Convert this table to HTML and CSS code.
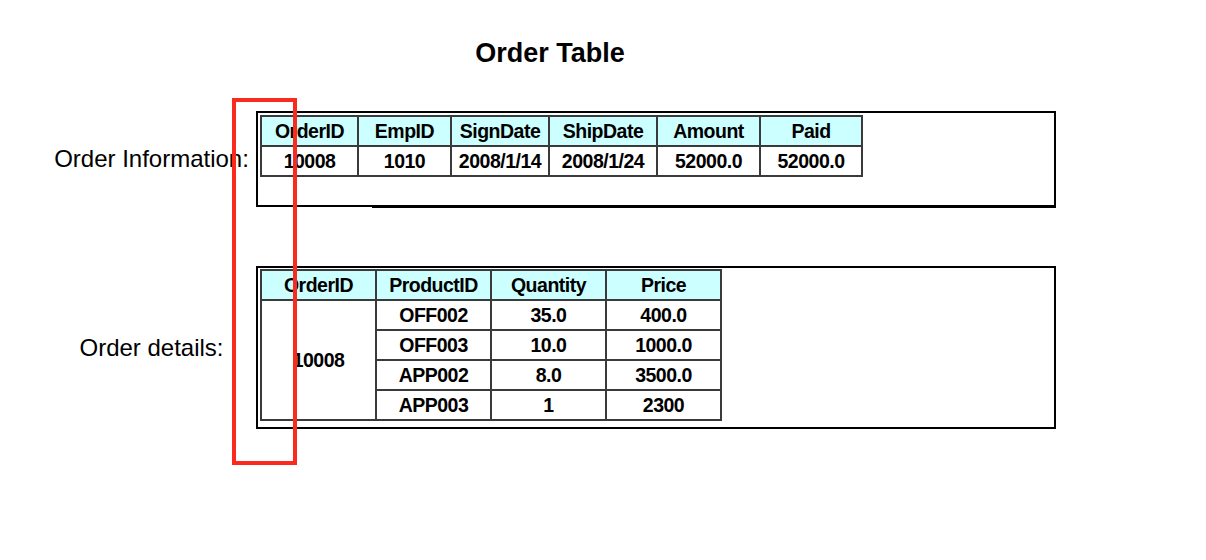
FILE: index.html
```html
<!DOCTYPE html>
<html lang="en">
<head>
<meta charset="utf-8">
<title>Order Table</title>
<link rel="stylesheet" href="styles.css">
</head>
<body>
<div class="page">
  <h1 class="title">Order Table</h1>

  <div class="section section-info">
    <div class="label">Order Information:</div>
    <div class="box box-info">
      <table class="grid grid-info">
        <colgroup>
          <col style="width:97px"><col style="width:93px"><col style="width:98px">
          <col style="width:108px"><col style="width:103px"><col style="width:102px">
        </colgroup>
        <tr class="head">
          <td>OrderID</td><td>EmpID</td><td>SignDate</td><td>ShipDate</td><td>Amount</td><td>Paid</td>
        </tr>
        <tr>
          <td>10008</td><td>1010</td><td>2008/1/14</td><td>2008/1/24</td><td>52000.0</td><td>52000.0</td>
        </tr>
      </table>
    </div>
  </div>

  <div class="section section-details">
    <div class="label">Order details:</div>
    <div class="box box-details">
      <table class="grid grid-details">
        <colgroup>
          <col style="width:115px"><col style="width:115px"><col style="width:115px"><col style="width:115px">
        </colgroup>
        <tr class="head">
          <td>OrderID</td><td>ProductID</td><td>Quantity</td><td>Price</td>
        </tr>
        <tr>
          <td rowspan="4" class="merged">10008</td><td>OFF002</td><td>35.0</td><td>400.0</td>
        </tr>
        <tr><td>OFF003</td><td>10.0</td><td>1000.0</td></tr>
        <tr><td>APP002</td><td>8.0</td><td>3500.0</td></tr>
        <tr><td>APP003</td><td>1</td><td>2300</td></tr>
      </table>
    </div>
  </div>

  <div class="highlight"></div>
</div>
</body>
</html>
```

FILE: styles.css
```css
html, body {
  margin: 0;
  padding: 0;
  background: #ffffff;
}

body {
  font-family: "Liberation Sans", Arial, sans-serif;
  color: #000000;
}

.page {
  position: relative;
  width: 1206px;
  height: 560px;
}

.title {
  margin: 0;
  padding-top: 37px;
  width: 1100px;
  text-align: center;
  font-size: 27px;
  line-height: 32px;
  font-weight: bold;
}

.section {
  display: flex;
  align-items: center;
}

.section-info {
  margin-top: 42px;
}

.section-details {
  margin-top: 59px;
}

.label {
  box-sizing: border-box;
  width: 256px;
  padding-left: 47px;
  text-align: center;
  font-size: 24px;
  line-height: 28px;
  white-space: nowrap;
}

.box {
  position: relative;
  box-sizing: border-box;
  width: 800px;
  border: 2px solid #000000;
}

.box-info {
  height: 96px;
  padding: 2px 2px 0 2px;
}

.box-info::after {
  content: "";
  position: absolute;
  left: 114px;
  right: -2px;
  bottom: -3px;
  height: 2px;
  background: #000000;
}

.box-details {
  height: 163px;
  padding: 1px 2px 0 2px;
}

.grid {
  border-collapse: collapse;
  table-layout: fixed;
  font-size: 19.5px;
  font-weight: bold;
  letter-spacing: -0.5px;
}

.grid-info {
  width: 601px;
}

.grid-details {
  width: 462px;
}

.grid td {
  border: 2px solid #3a3a3a;
  height: 28px;
  padding: 0;
  text-align: center;
  vertical-align: middle;
  line-height: 20px;
  white-space: nowrap;
}

.grid .head td {
  background: #ccffff;
}

.grid td.merged {
  background: #ffffff;
}

.highlight {
  position: absolute;
  left: 232px;
  top: 98px;
  width: 65px;
  height: 367px;
  box-sizing: border-box;
  border: 4px solid #fa2b1e;
  pointer-events: none;
}
```
